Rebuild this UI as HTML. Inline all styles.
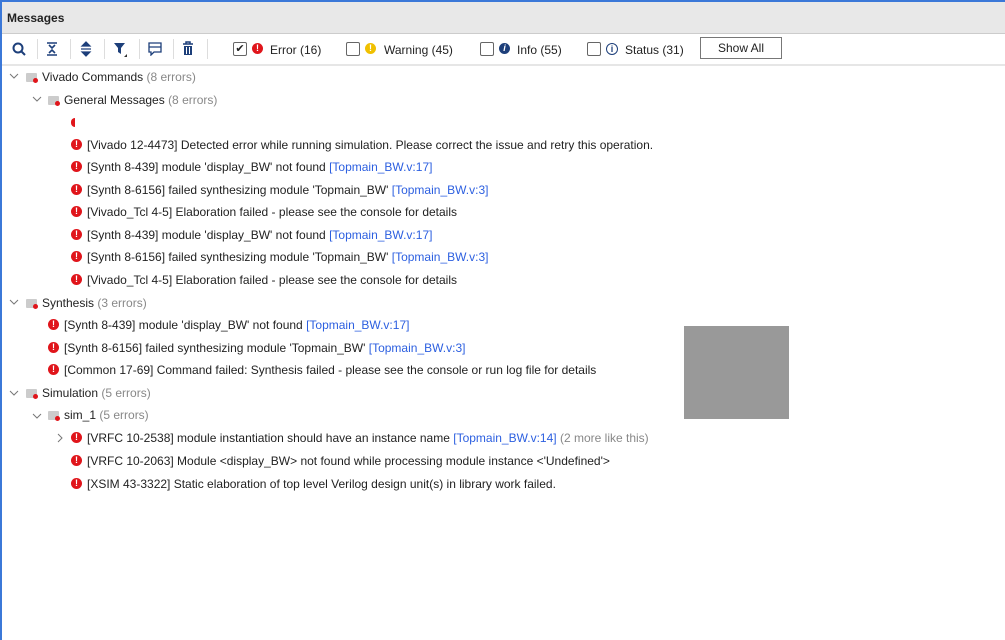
<!DOCTYPE html>
<html><head><style>
body{margin:0;width:1005px;height:640px;overflow:hidden;background:#fff;font-family:"Liberation Sans",sans-serif;font-size:12px;color:#222;position:relative}
.top{position:absolute;left:0;top:0;width:1005px;height:2px;background:#3b78d8}
.left{position:absolute;left:0;top:0;width:2px;height:640px;background:#3b78d8}
.hdr{position:absolute;left:2px;top:2px;right:0;height:31px;background:#e8e8e8;border-bottom:1px solid #ccc}
.hdr b{position:absolute;left:5px;top:9px;font-size:12px}
.tb{position:absolute;left:2px;top:34px;right:0;height:30px;border-bottom:2px solid #e6e6e6}
.ab{position:absolute}
.sep{position:absolute;top:5px;width:1px;height:20px;background:#ddd}
.cb{position:absolute;top:8px;width:12px;height:12px;border:1px solid #666;border-radius:2px;background:#fff}
.row{position:absolute;white-space:nowrap;height:18px;line-height:18px}
.err{display:inline-block;width:11px;height:11px;border-radius:50%;background:#e0151b;color:#fff;font-size:9px;font-weight:bold;text-align:center;line-height:11px;vertical-align:middle;position:relative;top:-1px;margin-right:5px}
.ti{position:absolute;width:11px;height:11px;border-radius:50%;background:#e0151b;color:#fff;font-size:9px;font-weight:bold;text-align:center;line-height:11px}
.lnk{color:#2c5fe0}
.g{color:#888}
.fold{display:inline-block;width:11px;height:9px;background:#ccc;border-radius:1px;position:relative;margin-right:5px;vertical-align:-1px}
.fold:after{content:"";position:absolute;right:-1px;bottom:-1px;width:5px;height:5px;border-radius:50%;background:#e0151b}
.chev{position:absolute}
</style></head><body>
<div class="top"></div><div class="left"></div>
<div class="hdr"><b>Messages</b></div>
<div class="tb">
<svg class="ab" style="left:10px;top:8px" width="14" height="14"><circle cx="6" cy="6" r="4.5" fill="none" stroke="#1d3f7a" stroke-width="2"/><line x1="9" y1="9" x2="13" y2="13" stroke="#1d3f7a" stroke-width="2"/></svg>
<div class="sep" style="left:35px"></div>
<svg class="ab" style="left:44px;top:8px" width="12" height="14"><path d="M1 1h10M1 13h10M3 3l3 3 3-3M3 11l3-3 3 3" stroke="#1d3f7a" stroke-width="1.6" fill="none"/></svg>
<div class="sep" style="left:68px"></div>
<svg class="ab" style="left:78px;top:7px" width="12" height="16"><path d="M2 5l4-4 4 4zM2 11l4 4 4-4z M1 8h10" fill="#1d3f7a" stroke="#1d3f7a" stroke-width="1.2"/></svg>
<div class="sep" style="left:102px"></div>
<svg class="ab" style="left:111px;top:8px" width="16" height="16"><path d="M1 1h11l-4 5v6l-3-2v-4z" fill="#1d3f7a"/><path d="M14 12v3h-3z" fill="#333"/></svg>
<div class="sep" style="left:137px"></div>
<svg class="ab" style="left:146px;top:8px" width="14" height="14"><path d="M1 1h12v9h-7l-3 3v-3h-2z M1 5h12" stroke="#1d3f7a" stroke-width="1.3" fill="none"/></svg>
<div class="sep" style="left:171px"></div>
<svg class="ab" style="left:180px;top:7px" width="12" height="15"><path d="M1 3h10M4 3v-2h4v2" stroke="#1d3f7a" stroke-width="1.5" fill="none"/><rect x="2" y="5" width="8" height="9" fill="#1d3f7a"/><path d="M4.5 6v7M7.5 6v7" stroke="#fff"/></svg>
<div class="sep" style="left:205px"></div>
<div class="cb" style="left:231px;font-size:11px;line-height:12px;text-align:center">✔</div>
<span class="ti" style="left:250px;top:9px">!</span><span class="ab" style="left:268px;top:9px">Error (16)</span>
<div class="cb" style="left:344px"></div>
<span class="ti" style="left:363px;top:9px;background:#f0c000">!</span><span class="ab" style="left:382px;top:9px">Warning (45)</span>
<div class="cb" style="left:478px"></div>
<span class="ti" style="left:497px;top:9px;background:#1d3f7a;font-style:italic">i</span><span class="ab" style="left:515px;top:9px">Info (55)</span>
<div class="cb" style="left:585px"></div>
<span class="ti" style="left:604px;top:9px;background:#fff;border:1px solid #1d3f7a;color:#1d3f7a;width:10px;height:10px;line-height:10px">i</span><span class="ab" style="left:623px;top:9px">Status (31)</span>
<div class="ab" style="left:698px;top:3px;width:80px;height:20px;border:1px solid #777;text-align:center;line-height:20px">Show All</div>
</div>

<svg class="chev" style="left:9px;top:73px" width="10" height="6"><path d="M1 1l4 4 4-4" stroke="#777" fill="none"/></svg>
<div class="row" style="left:26px;top:68px"><span class="fold"></span>Vivado Commands <span class="g">(8 errors)</span></div>
<svg class="chev" style="left:32px;top:96px" width="10" height="6"><path d="M1 1l4 4 4-4" stroke="#777" fill="none"/></svg>
<div class="row" style="left:48px;top:91px"><span class="fold"></span>General Messages <span class="g">(8 errors)</span></div>
<div class="ab" style="left:71px;top:118px;width:4px;height:9px;background:#e0151b;border-radius:4px 0 0 4px"></div>
<div class="row" style="left:71px;top:136px"><span class="err">!</span>[Vivado 12-4473] Detected error while running simulation. Please correct the issue and retry this operation.</div>
<div class="row" style="left:71px;top:158px"><span class="err">!</span>[Synth 8-439] module 'display_BW' not found <span class="lnk">[Topmain_BW.v:17]</span></div>
<div class="row" style="left:71px;top:181px"><span class="err">!</span>[Synth 8-6156] failed synthesizing module 'Topmain_BW' <span class="lnk">[Topmain_BW.v:3]</span></div>
<div class="row" style="left:71px;top:203px"><span class="err">!</span>[Vivado_Tcl 4-5] Elaboration failed - please see the console for details</div>
<div class="row" style="left:71px;top:226px"><span class="err">!</span>[Synth 8-439] module 'display_BW' not found <span class="lnk">[Topmain_BW.v:17]</span></div>
<div class="row" style="left:71px;top:248px"><span class="err">!</span>[Synth 8-6156] failed synthesizing module 'Topmain_BW' <span class="lnk">[Topmain_BW.v:3]</span></div>
<div class="row" style="left:71px;top:271px"><span class="err">!</span>[Vivado_Tcl 4-5] Elaboration failed - please see the console for details</div>
<svg class="chev" style="left:9px;top:299px" width="10" height="6"><path d="M1 1l4 4 4-4" stroke="#777" fill="none"/></svg>
<div class="row" style="left:26px;top:294px"><span class="fold"></span>Synthesis <span class="g">(3 errors)</span></div>
<div class="row" style="left:48px;top:316px"><span class="err">!</span>[Synth 8-439] module 'display_BW' not found <span class="lnk">[Topmain_BW.v:17]</span></div>
<div class="row" style="left:48px;top:339px"><span class="err">!</span>[Synth 8-6156] failed synthesizing module 'Topmain_BW' <span class="lnk">[Topmain_BW.v:3]</span></div>
<div class="row" style="left:48px;top:361px"><span class="err">!</span>[Common 17-69] Command failed: Synthesis failed - please see the console or run log file for details</div>
<svg class="chev" style="left:9px;top:390px" width="10" height="6"><path d="M1 1l4 4 4-4" stroke="#777" fill="none"/></svg>
<div class="row" style="left:26px;top:384px"><span class="fold"></span>Simulation <span class="g">(5 errors)</span></div>
<svg class="chev" style="left:32px;top:413px" width="10" height="6"><path d="M1 1l4 4 4-4" stroke="#777" fill="none"/></svg>
<div class="row" style="left:48px;top:406px"><span class="fold"></span>sim_1 <span class="g">(5 errors)</span></div>
<svg class="chev" style="left:57px;top:433px" width="6" height="10"><path d="M1 1l4 4-4 4" stroke="#777" fill="none"/></svg>
<div class="row" style="left:71px;top:429px"><span class="err">!</span>[VRFC 10-2538] module instantiation should have an instance name <span class="lnk">[Topmain_BW.v:14]</span> <span class="g">(2 more like this)</span></div>
<div class="row" style="left:71px;top:452px"><span class="err">!</span>[VRFC 10-2063] Module &lt;display_BW&gt; not found while processing module instance &lt;'Undefined'&gt;</div>
<div class="row" style="left:71px;top:475px"><span class="err">!</span>[XSIM 43-3322] Static elaboration of top level Verilog design unit(s) in library work failed.</div>
<div class="ab" style="left:684px;top:326px;width:105px;height:93px;background:#999"></div>
</body></html>
